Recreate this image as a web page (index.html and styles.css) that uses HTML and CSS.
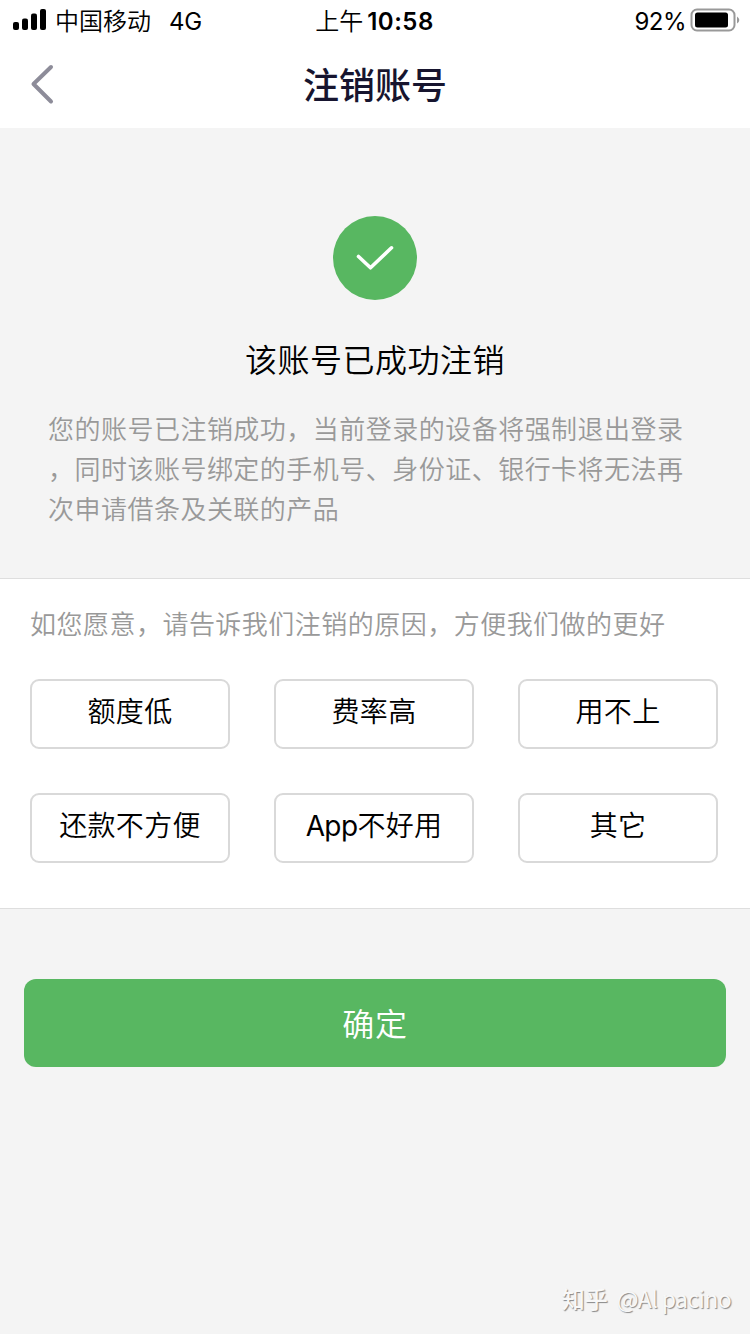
FILE: index.html
```html
<!DOCTYPE html>
<html lang="zh-CN">
<head>
<meta charset="utf-8">
<meta name="viewport" content="width=device-width">
<title>注销账号</title>
<link rel="stylesheet" href="styles.css">
</head>
<body>
<div class="screen">
  <header class="top">
    <div class="status">
      <div class="carrier">
        <svg class="signal" width="34" height="22" viewBox="0 0 34 22"><rect x="0" y="13" width="6" height="8" rx="2"/><rect x="9" y="9.500" width="6" height="11.500" rx="2"/><rect x="18" y="4.500" width="6" height="16.500" rx="2"/><rect x="27" y="0" width="6" height="21" rx="2"/></svg>
        <span class="operator">中国移动</span>
        <span class="network">4G</span>
      </div>
      <div class="clock"><span class="period">上午</span><span class="time">10:58</span></div>
      <div class="power">
        <span class="percent">92%</span>
        <svg class="battery" width="50" height="24" viewBox="0 0 50 24"><rect x="1.500" y="1.500" width="43" height="21" rx="5.500" fill="none" stroke="#999" stroke-width="2"/><rect x="5" y="4.500" width="33" height="15" rx="2.500"/><path d="M47 8.500Q49.300 10 49.300 12T47 15.500Z" fill="#999"/></svg>
      </div>
    </div>
    <nav class="nav">
      <svg class="back" width="28" height="44" viewBox="0 0 28 44"><path d="M22 5 4.500 22 22 39.500"/></svg>
      <h1 class="nav-title">注销账号</h1>
    </nav>
  </header>
  <main>
    <section class="result">
      <svg class="success" width="84" height="84" viewBox="0 0 84 84"><circle cx="42" cy="42" r="42" fill="#58b761"/><path d="M25.500 40.500 37.500 51.800 58.500 31.800" fill="none" stroke="#fff" stroke-width="3.600" stroke-linecap="round" stroke-linejoin="round"/></svg>
      <h2 class="result-title">该账号已成功注销</h2>
      <p class="result-text">您的账号已注销成功，当前登录的设备将强制退出登录<br>，同时该账号绑定的手机号、身份证、银行卡将无法再<br>次申请借条及关联的产品</p>
    </section>
    <section class="survey">
      <p class="question">如您愿意，请告诉我们注销的原因，方便我们做的更好</p>
      <div class="reasons">
        <button class="reason">额度低</button>
        <button class="reason">费率高</button>
        <button class="reason">用不上</button>
        <button class="reason">还款不方便</button>
        <button class="reason"><span class="latin">App</span>不好用</button>
        <button class="reason">其它</button>
      </div>
    </section>
    <button class="confirm">确定</button>
  </main>
  <footer class="watermark"><span class="brand">知乎</span><span class="author">@Al pacino</span></footer>
</div>
</body>
</html>
```

FILE: styles.css
```css
* { box-sizing: border-box; }
body { margin: 0; font-family: Inter, "Noto Sans CJK SC", sans-serif; font-weight: 350; color: #000; }
h1, h2, p { margin: 0; font-weight: inherit; }
button { padding: 0; border: 0; font: inherit; color: inherit; }
svg { display: block; flex: none; }
.screen { width: 750px; height: 1334px; display: flex; flex-direction: column; background: #f4f4f4; overflow: hidden; }
.top { height: 128px; background: #fff; }
.status { height: 40px; display: grid; grid-template-columns: 1fr auto 1fr; padding: 0 10px 0 13px; font-size: 24px; line-height: 40px; white-space: nowrap; }
.carrier, .power, .clock { display: flex; align-items: center; }
.carrier span, .clock span, .percent { padding-top: 2px; }
.signal { margin-top: -3px; }
.battery { margin-top: -2px; }
.operator { margin-left: 8px; }
.network { margin-left: 18px; letter-spacing: -.3px; font-weight: 400; }
.clock { margin-left: -4px; }
.time { font-weight: 600; margin-left: 4px; letter-spacing: .5px; }
.power { justify-content: flex-end; gap: 4px; }
.percent { letter-spacing: -.5px; font-weight: 400; }
.nav { height: 88px; display: grid; grid-template-columns: 60px 1fr 60px; align-items: center; }
.back { margin-left: 29px; fill: none; stroke: #8d8c99; stroke-width: 4; stroke-linecap: round; stroke-linejoin: round; }
.nav-title { padding-top: 4px; text-align: center; font-size: 36px; line-height: 50px; font-weight: 500; color: #17152f; }
.result { height: 450px; padding-top: 88px; }
.success { margin: 0 auto; }
.result-title { margin-top: 37px; text-align: center; font-size: 32px; line-height: 48px; letter-spacing: .5px; }
.result-text { margin: 25px 0 0 48px; font-size: 26px; line-height: 40px; letter-spacing: .48px; color: #999; white-space: nowrap; }
.survey { height: 331px; padding: 26px 32px 0 30px; background: #fff; border: solid #dedede; border-width: 1px 0; }
.question { font-size: 26px; line-height: 40px; letter-spacing: .48px; color: #999; white-space: nowrap; }
.reasons { display: grid; grid-template-columns: repeat(3, 200px); grid-auto-rows: 70px; gap: 44px; margin-top: 34px; }
.reason { display: flex; justify-content: center; padding-top: 11px; background: #fff; border: 2px solid #d9d9d9; border-radius: 9px; font-size: 28px; line-height: 40px; letter-spacing: .3px; }
.latin { letter-spacing: -.6px; font-weight: 400; }
.confirm { display: block; width: 702px; height: 88px; margin: 70px auto 0; padding-bottom: 2px; border-radius: 12px; background: #58b761; color: #fff; font-size: 32px; letter-spacing: .7px; }
.watermark { margin-top: auto; padding: 0 19px 20px 0; display: flex; justify-content: flex-end; gap: 9px; font-family: "Noto Sans CJK SC", sans-serif; font-size: 23px; line-height: 32px; color: #f8f8f8; text-shadow: 1px 1px 1px #888; }
.brand { font-weight: 500; }
.author { letter-spacing: -.6px; font-weight: 400; }
```
